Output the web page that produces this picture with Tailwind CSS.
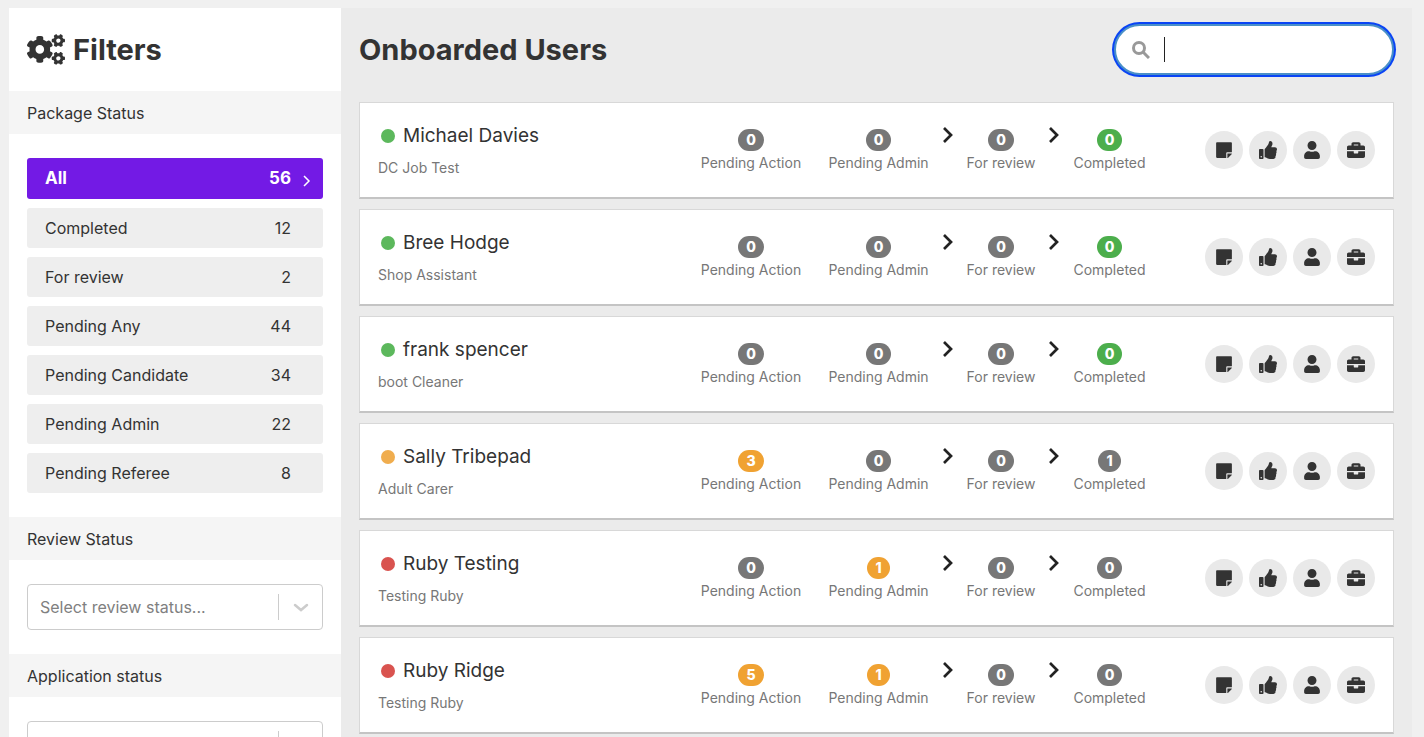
<!DOCTYPE html>
<html lang="en">
<head>
  <meta charset="UTF-8">
  <meta name="viewport" content="width=device-width, initial-scale=1.0">
  <title>Onboarded Users</title>
  <script src="https://cdn.jsdelivr.net/npm/@tailwindcss/browser@4"></script>
</head>

<body class="bg-[#f0f0f0] h-screen overflow-hidden font-['Inter',sans-serif] text-[#333]">

  <!-- Icons -->
  <svg class="hidden" xmlns="http://www.w3.org/2000/svg">
    <symbol id="icon-note" viewBox="0 0 448 512">
      <path d="M312 320h136V56c0-13.300-10.700-24-24-24H24C10.700 32 0 42.700 0 56v400c0 13.300 10.700 24 24 24h264V344c0-13.200 10.800-24 24-24zm129 55l-98 98c-4.500 4.500-10.600 7-17 7h-6V352h128v6.100c0 6.300-2.500 12.400-7 16.900z" />
    </symbol>
    <symbol id="icon-thumb" viewBox="0 0 512 512">
      <path d="M104 224H24c-13.255 0-24 10.745-24 24v240c0 13.255 10.745 24 24 24h80c13.255 0 24-10.745 24-24V248c0-13.255-10.745-24-24-24zM64 472c-13.255 0-24-10.745-24-24s10.745-24 24-24 24 10.745 24 24-10.745 24-24 24zM384 81.452c0 42.416-25.970 66.208-33.277 94.548h101.723c33.397 0 59.397 27.746 59.553 58.098.084 17.938-7.546 37.249-19.439 49.197l-.11.11c9.836 23.337 8.237 56.037-9.308 79.469 8.681 25.895-.069 57.704-16.382 74.757 4.298 17.598 2.244 32.575-6.148 44.632C440.202 511.587 389.616 512 346.839 512l-2.845-.001c-48.287-.017-87.806-17.598-119.56-31.725-15.957-7.099-36.821-15.887-52.651-16.178-6.54-.12-11.783-5.457-11.783-11.998v-213.77c0-3.2 1.282-6.271 3.558-8.521 39.614-39.144 56.648-80.587 89.117-113.111 14.804-14.832 20.188-37.236 25.393-58.902C282.515 39.293 291.817 0 312 0c24 0 72 8 72 81.452z" />
    </symbol>
    <symbol id="icon-user" viewBox="0 0 448 512">
      <path d="M224 256c70.7 0 128-57.3 128-128S294.7 0 224 0 96 57.3 96 128s57.3 128 128 128zm89.6 32h-16.7c-22.2 10.2-46.9 16-72.9 16s-50.6-5.8-72.9-16h-16.7C60.2 288 0 348.2 0 422.4V464c0 26.500 21.5 48 48 48h352c26.5 0 48-21.5 48-48v-41.6c0-74.2-60.2-134.4-134.4-134.4z" />
    </symbol>
    <symbol id="icon-case" viewBox="0 0 512 512">
      <path d="M320 336c0 8.840-7.160 16-16 16h-96c-8.840 0-16-7.160-16-16v-48H0v144c0 25.600 22.400 48 48 48h416c25.600 0 48-22.400 48-48V288H320v48zm144-208h-80V80c0-25.600-22.400-48-48-48H176c-25.600 0-48 22.400-48 48v48H48c-25.600 0-48 22.400-48 48v80h512v-80c0-25.600-22.400-48-48-48zm-144 0H192V96h128v32z" />
    </symbol>
    <symbol id="icon-chevron" viewBox="0 0 12 18">
      <path d="M2 2l7 7-7 7" fill="none" stroke="currentColor" stroke-width="2.700" />
    </symbol>
  </svg>

  <div class="flex items-start pt-2 pl-[9px] pr-3">

    <aside class="w-[332px] shrink-0 bg-white">
      <h2 class="flex items-center gap-2 h-[83px] px-[18px] text-[29px] font-bold">
        <svg class="w-[38px] h-[31px]" viewBox="0 0 640 512" fill="currentColor">
          <path id="small-cog" d="M512.1 191l-8.2 14.3c-3 5.3-9.4 7.5-15.1 5.4-11.8-4.4-22.6-10.7-32.1-18.6-4.6-3.8-5.8-10.5-2.8-15.7l8.2-14.3c-6.9-8-12.3-17.3-15.9-27.4h-16.5c-6 0-11.2-4.3-12.2-10.3-2-12-2.1-24.6 0-37.1 1-6 6.200-10.400 12.200-10.400h16.500c3.600-10.100 9-19.400 15.900-27.400l-8.200-14.300c-3-5.200-1.900-11.900 2.800-15.700 9.500-7.900 20.400-14.200 32.100-18.600 5.700-2.100 12.100.1 15.100 5.400l8.200 14.300c10.500-1.900 21.200-1.900 31.700 0L552 6.300c3-5.300 9.400-7.500 15.100-5.400 11.800 4.400 22.600 10.700 32.100 18.600 4.600 3.800 5.800 10.500 2.800 15.700l-8.200 14.300c6.900 8 12.300 17.300 15.900 27.400h16.500c6 0 11.200 4.300 12.200 10.300 2 12 2.100 24.600 0 37.100-1 6-6.200 10.400-12.200 10.400h-16.500c-3.600 10.100-9 19.400-15.900 27.400l8.200 14.300c3 5.200 1.900 11.900-2.800 15.700-9.500 7.900-20.400 14.200-32.100 18.600-5.700 2.100-12.100-.1-15.100-5.400l-8.200-14.300c-10.400 1.900-21.200 1.900-31.700 0zm-10.500-58.800c38.500 29.600 82.400-14.300 52.800-52.800-38.500-29.700-82.400 14.300-52.800 52.800z" />
          <use href="#small-cog" y="299" />
          <path d="M386.3 286.1l33.7 16.8c10.1 5.8 14.5 18.1 10.5 29.1-8.9 24.2-26.4 46.4-42.6 65.8-7.4 8.9-20.2 11.1-30.3 5.3l-29.1-16.8c-16 13.7-34.6 24.6-54.9 31.7v33.6c0 11.6-8.3 21.6-19.7 23.6-24.6 4.2-50.4 4.4-75.9 0-11.5-2-20-11.9-20-23.6V418c-20.3-7.2-38.9-18-54.9-31.7L74 403c-10 5.8-22.9 3.6-30.3-5.3-16.2-19.4-33.3-41.6-42.2-65.7-4-10.9.4-23.2 10.5-29.1l33.3-16.8c-3.9-20.9-3.9-42.4 0-63.4L12 205.800c-10.100-5.800-14.600-18.100-10.500-29 8.900-24.200 26-46.400 42.200-65.800 7.400-8.900 20.200-11.100 30.300-5.300l29.100 16.800c16-13.700 34.600-24.600 54.900-31.700V57.100c0-11.500 8.200-21.500 19.600-23.500 24.600-4.200 50.500-4.400 76-.1 11.500 2 20 11.900 20 23.600v33.600c20.300 7.200 38.900 18 54.900 31.700l29.100-16.800c10-5.800 22.900-3.600 30.300 5.300 16.200 19.400 33.200 41.600 42.100 65.800 4 10.900.1 23.200-10 29.100l-33.700 16.800c3.900 21 3.900 42.500 0 63.500zm-117.600 21.100c59.200-77-28.700-164.900-105.700-105.700-59.200 77 28.700 164.900 105.700 105.700z" />
        </svg>
        Filters
      </h2>

      <h3 class="flex items-center h-[43px] px-[18px] bg-[#f5f5f5] text-base">Package Status</h3>
      <div id="filters" class="flex flex-col gap-[9px] px-[18px] py-6"></div>

      <h3 class="h-[43px] px-[18px] bg-[#f5f5f5] text-base">
        <label for="review" class="flex items-center h-full">Review Status</label>
      </h3>
      <div class="px-[18px] py-6">
        <div class="relative">
          <select id="review" class="appearance-none w-full h-[46px] px-3 rounded border border-[#ccc] bg-white text-base text-[#808080]">
            <option>Select review status...</option>
          </select>
          <span class="absolute right-0 inset-y-0 flex items-center pointer-events-none text-[#ccc]">
            <span class="w-px h-[26px] bg-[#ccc]"></span>
            <svg class="w-5 h-5 mx-3" viewBox="0 0 20 20" fill="none" stroke="currentColor" stroke-width="2.500" stroke-linecap="round"><path d="M4 8l6 5 6-5" /></svg>
          </span>
        </div>
      </div>

      <h3 class="h-[43px] px-[18px] bg-[#f5f5f5] text-base">
        <label for="application" class="flex items-center h-full">Application status</label>
      </h3>
      <div class="px-[18px] py-6">
        <div class="relative">
          <select id="application" class="appearance-none w-full h-[46px] px-3 rounded border border-[#ccc] bg-white text-base text-[#808080]">
            <option>Select application status...</option>
          </select>
          <span class="absolute right-0 inset-y-0 flex items-center pointer-events-none text-[#ccc]">
            <span class="w-px h-[26px] bg-[#ccc]"></span>
            <svg class="w-5 h-5 mx-3" viewBox="0 0 20 20" fill="none" stroke="currentColor" stroke-width="2.500" stroke-linecap="round"><path d="M4 8l6 5 6-5" /></svg>
          </span>
        </div>
      </div>
    </aside>

    <main class="flex-1 min-h-screen bg-[#ebebeb] pl-[18px] pr-[18px]">
      <div class="flex items-center justify-between h-[83px]">
        <h1 class="text-[29px] font-bold">Onboarded Users</h1>
        <label class="flex items-center w-[280px] h-[51px] px-4 rounded-full bg-white border-2 border-[#4a90c8] ring-2 ring-[#0a44f5]">
          <svg class="w-[18px] h-[18px] text-[#999]" viewBox="0 0 18 18" fill="none" stroke="currentColor" stroke-width="3"><circle cx="7" cy="7" r="5.500" /><path d="M11 11l6 6" /></svg>
          <span class="w-px h-[25px] ml-[14px] bg-[#222]"></span>
          <input id="search" type="text" aria-label="Search users" autofocus class="min-w-0 flex-1 h-9 outline-none text-[22px] caret-transparent">
        </label>
      </div>
      <div id="users" class="flex flex-col gap-[10px] pt-[11px] pb-6"></div>
    </main>
  </div>

  <script>
    const filters = [
      ['All', 56], ['Completed', 12], ['For review', 2], ['Pending Any', 44],
      ['Pending Candidate', 34], ['Pending Admin', 22], ['Pending Referee', 8],
    ];

    const dots = { green: 'bg-[#5cb85c]', orange: 'bg-[#f0ad4e]', red: 'bg-[#d9534f]' };

    // name, job, status, [pending action, pending admin, for review, completed]
    const users = [
      ['Michael Davies', 'DC Job Test', 'green', [0, 0, 0, 0]],
      ['Bree Hodge', 'Shop Assistant', 'green', [0, 0, 0, 0]],
      ['frank spencer', 'boot Cleaner', 'green', [0, 0, 0, 0]],
      ['Sally Tribepad', 'Adult Carer', 'orange', [3, 0, 0, 1]],
      ['Ruby Testing', 'Testing Ruby', 'red', [0, 1, 0, 0]],
      ['Ruby Ridge', 'Testing Ruby', 'red', [5, 1, 0, 0]],
    ];

    const chevron = '<svg class="w-3 h-[18px] mt-[-3px] text-[#222]"><use href="#icon-chevron" /></svg>';

    function step(count, label, width, color) {
      return `<div class="flex flex-col items-center ${width}">
        <span class="min-w-[22px] px-2 h-[22px] leading-[22px] rounded-full text-white text-[14px] font-extrabold text-center ${color}">${count}</span>
        <span class="text-[14px] leading-6 text-[#777] whitespace-nowrap">${label}</span>
      </div>`;
    }

    function action(icon, label) {
      return `<button aria-label="${label}" class="flex items-center justify-center w-[38px] h-[38px] pb-px rounded-full bg-[#e9e9e9] text-[#333] hover:bg-gray-300">
        <svg class="w-[18px] h-[18px]" fill="currentColor"><use href="#${icon}" /></svg>
      </button>`;
    }

    document.getElementById('filters').innerHTML = filters.map(([name, count], i) => i === 0
      ? `<button class="flex items-center h-[41px] pl-[18px] pr-3 rounded-[3px] bg-[#731ae5] text-white text-[17px] font-bold">
          <span>${name}</span><span class="ml-auto">${count}</span>
          <svg class="w-2 h-3 ml-3 mt-1" viewBox="0 0 8 12" fill="none" stroke="currentColor" stroke-width="1.500"><path d="M1 1l5 5-5 5" /></svg>
        </button>`
      : `<button class="flex items-center h-10 pl-[18px] pr-8 rounded-[3px] bg-[#eee] text-base">
          <span>${name}</span><span class="ml-auto">${count}</span>
        </button>`).join('');

    document.getElementById('users').innerHTML = users.map(([name, job, status, n]) => {
      const grey = 'bg-[#777]';
      const orange = 'bg-[#f0a232]';
      const done = status === 'green' ? 'bg-[#4cae4c]' : grey;
      return `<section class="flex h-[97px] pl-[18px] pr-[18px] bg-white border border-[#d8d8d8] border-b-2 border-b-[#c4c4c4]">
        <div class="flex-1 pt-[19px]">
          <h2 class="flex items-center gap-2 pl-[3px] text-[19px] leading-7"><span class="w-[14px] h-[14px] rounded-full ${dots[status]}"></span>${name}</h2>
          <p class="pt-2 text-[14px] leading-5 text-[#777]">${job}</p>
        </div>
        <div class="flex pt-[26px]">
          ${step(n[0], 'Pending Action', 'w-[128px]', n[0] ? orange : grey)}
          ${step(n[1], 'Pending Admin', 'w-[127px]', n[1] ? orange : grey)}
          ${chevron}
          ${step(n[2], 'For review', 'w-[94px]', grey)}
          ${chevron}
          ${step(n[3], 'Completed', 'w-[99px]', done)}
        </div>
        <div class="flex gap-[6px] pl-[46px] pt-7">
          ${action('icon-note', 'Notes')}
          ${action('icon-thumb', 'Approve')}
          ${action('icon-user', 'Profile')}
          ${action('icon-case', 'Job')}
        </div>
      </section>`;
    }).join('');

    document.getElementById('search').focus();
  </script>

</body>
</html>
